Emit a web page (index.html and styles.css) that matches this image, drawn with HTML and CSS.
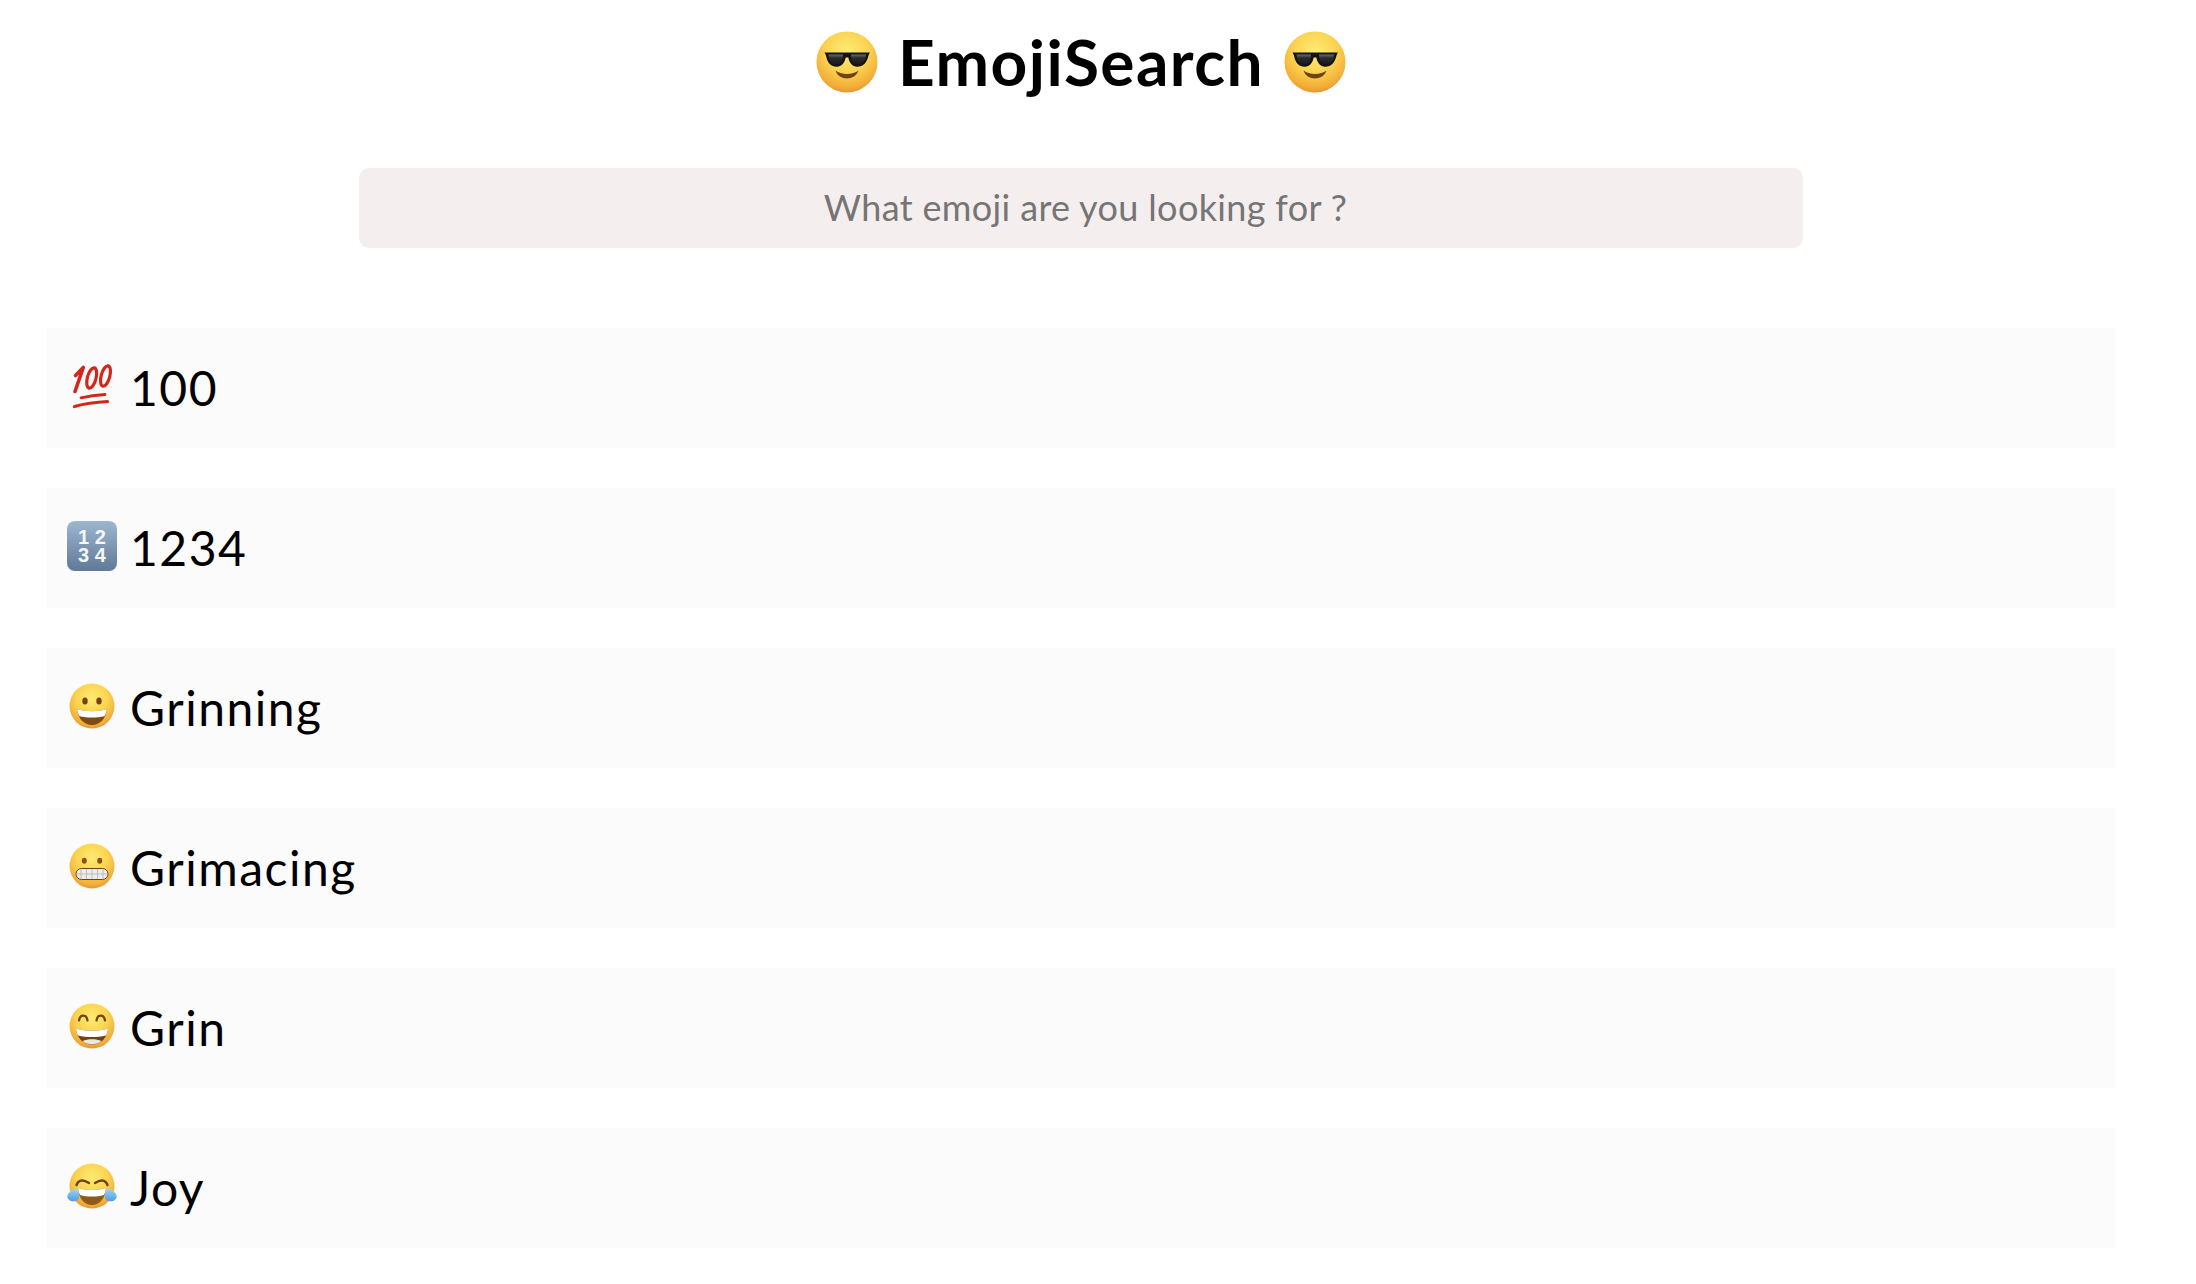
FILE: index.html
```html
<!DOCTYPE html>
<html lang="en">
<head>
<meta charset="utf-8">
<title>EmojiSearch</title>
<link rel="stylesheet" href="styles.css">
</head>
<body>
<svg class="defs" width="0" height="0" aria-hidden="true">
  <defs>
    <radialGradient id="face" cx="50%" cy="32%" r="70%">
      <stop offset="0" stop-color="#fdeb72"/>
      <stop offset="0.5" stop-color="#fbd351"/>
      <stop offset="0.85" stop-color="#f3ad38"/>
      <stop offset="1" stop-color="#e8922a"/>
    </radialGradient>
    <linearGradient id="tile" x1="0" y1="0" x2="0" y2="1">
      <stop offset="0" stop-color="#9db6d0"/>
      <stop offset="1" stop-color="#5f7a97"/>
    </linearGradient>
    <linearGradient id="lens" x1="0" y1="0" x2="0" y2="1">
      <stop offset="0" stop-color="#6c6c70"/>
      <stop offset="0.35" stop-color="#2a2a2d"/>
      <stop offset="1" stop-color="#18181a"/>
    </linearGradient>
    <linearGradient id="drop" x1="0" y1="0" x2="0" y2="1">
      <stop offset="0" stop-color="#a5d6f7"/>
      <stop offset="1" stop-color="#4a9fe6"/>
    </linearGradient>
    <symbol id="e-cool" viewBox="0 0 62 62">
      <circle cx="31" cy="31" r="30.500" fill="url(#face)"/>
      <path d="M8.500 21.500H53.800L52.500 24.500C50.500 33.500 45.500 36.500 39.500 35.500 35 34.800 33 30 32.300 26.500H29.700C29 30 27 34.800 22.500 35.500 16.500 36.500 11.500 33.500 10 24.500Z" fill="#141416"/>
      <path d="M12.500 23.500H27C27 30 24.500 33.500 20.500 33.500 15.500 33.500 13 30 12.500 23.500ZM35 23.500H50C49.500 30 47 33.500 42 33.500 38 33.500 35 30 35 23.500Z" fill="url(#lens)"/>
      <path d="M19.500 39.500C25 44 37 44 42.500 39.500 39.500 50 22.500 50 19.500 39.500Z" fill="#6f4313"/>
    </symbol>
    <symbol id="e-100" viewBox="0 0 50 50">
      <g fill="none" stroke="#d3271c" stroke-linecap="round">
        <path d="M8.500 14.500L16.300 6.500 8 30.500" stroke-width="3.600" stroke-linejoin="round"/>
        <ellipse cx="24.700" cy="17" rx="4.300" ry="10.500" transform="rotate(15 24.700 17)" stroke-width="3.200"/>
        <ellipse cx="38.500" cy="15" rx="4.300" ry="10.500" transform="rotate(15 38.500 15)" stroke-width="3.200"/>
        <path d="M14 36.800C22 35 30 34 38 33.500" stroke-width="2.800"/>
        <path d="M7.500 45.500C18 42.500 30 41 40.500 40.500" stroke-width="3.200"/>
      </g>
    </symbol>
    <symbol id="e-1234" viewBox="0 0 50 50">
      <rect width="50" height="50" rx="8" fill="url(#tile)"/>
      <text class="tile-text" x="25" y="22.500" text-anchor="middle">1 2</text>
      <text class="tile-text" x="25" y="41" text-anchor="middle">3 4</text>
    </symbol>
    <symbol id="e-grinning" viewBox="0 0 50 50">
      <circle cx="25" cy="25" r="22.500" fill="url(#face)"/>
      <ellipse cx="18" cy="20" rx="2.700" ry="3.500" fill="#6f4313"/>
      <ellipse cx="32" cy="20" rx="2.700" ry="3.500" fill="#6f4313"/>
      <path d="M10.300 28C18 31 32 31 39.700 28 39.700 37 33 44 25 44S10.300 37 10.300 28Z" fill="#7d4c14"/>
      <path d="M10.300 28C18 31 32 31 39.700 28 39.700 31 38.700 33 37.500 35.300 30 37 20 37 12.500 35.300 11.300 33 10.300 31 10.300 28Z" fill="#fff"/>
    </symbol>
    <symbol id="e-grimacing" viewBox="0 0 50 50">
      <circle cx="25" cy="25" r="22.500" fill="url(#face)"/>
      <ellipse cx="17.300" cy="19.700" rx="2.500" ry="3" fill="#8b5314"/>
      <ellipse cx="32.700" cy="19.700" rx="2.500" ry="3" fill="#8b5314"/>
      <rect x="9" y="27.500" width="32" height="11" rx="5.500" fill="#ececec" stroke="#6f4313" stroke-width="1"/>
      <path d="M9 33H41M14 28V38M19.500 28V38M25 28V38M30.500 28V38M36 28V38" stroke="#b5b5b5" stroke-width="0.800"/>
    </symbol>
    <symbol id="e-grin" viewBox="0 0 50 50">
      <circle cx="25" cy="25" r="22.500" fill="url(#face)"/>
      <path d="M12 19.500C13 13 19.500 13 20.500 19.500M29.500 19.500C30.500 13 37 13 38 19.500" fill="none" stroke="#6f4313" stroke-width="2.200" stroke-linecap="round"/>
      <path d="M9 27.500C18 30.500 32 30.500 41 27.500 40.500 36.500 34 43.500 25 43.500 16 43.500 9.500 36.500 9 27.500Z" fill="#6f4313"/>
      <path d="M9 27.500C18 30.500 32 30.500 41 27.500 40.800 30 40 32.500 39 34.500 30 36.500 20 36.500 11 34.500 10 32.500 9.200 30 9 27.500Z" fill="#fff"/>
      <path d="M15.500 40C20.500 37.800 29.500 37.800 34.500 40 29.500 44.300 20.500 44.300 15.500 40Z" fill="#e8e8e8"/>
    </symbol>
    <symbol id="e-joy" viewBox="0 0 50 50">
      <circle cx="25" cy="25" r="22.500" fill="url(#face)"/>
      <path d="M9.500 24C11 19.500 15 17.500 22 22M28 22C35 17.500 39 19.500 40.500 24" fill="none" stroke="#6f4313" stroke-width="2.400" stroke-linecap="round"/>
      <path d="M11.300 27C18 29.500 32 29.500 38.700 27 38.700 37 33 44 25 44S11.300 37 11.300 27Z" fill="#8b5a1d"/>
      <path d="M11.300 27C18 29.500 32 29.500 38.700 27 38.700 30 38 32 37 34 30 36 20 36 13 34 12 32 11.300 30 11.300 27Z" fill="#fff"/>
      <path d="M9.500 27C9.500 29 12.300 32 12.300 35.500 12.300 38.500 9.500 40.300 6.300 40.300 2.800 40.300 0.300 38 0.300 35.500 0.300 32 5 29 9.500 27Z" fill="url(#drop)"/>
      <path d="M40.500 27C40.500 29 37.700 32 37.700 35.500 37.700 38.500 40.500 40.300 43.700 40.300 47.200 40.300 49.700 38 49.700 35.500 49.700 32 45 29 40.500 27Z" fill="url(#drop)"/>
    </symbol>
  </defs>
</svg>
<main class="page">
  <header class="title">
    <svg class="title-emoji"><use href="#e-cool"/></svg>
    <h1 class="title-text">EmojiSearch</h1>
    <svg class="title-emoji"><use href="#e-cool"/></svg>
  </header>
  <div class="search">
    <input class="search-input" type="text" placeholder="What emoji are you looking for ?">
  </div>
  <ul class="results">
    <li class="result"><svg class="result-emoji"><use href="#e-100"/></svg><span class="result-name">100</span></li>
    <li class="result"><svg class="result-emoji"><use href="#e-1234"/></svg><span class="result-name">1234</span></li>
    <li class="result"><svg class="result-emoji"><use href="#e-grinning"/></svg><span class="result-name">Grinning</span></li>
    <li class="result"><svg class="result-emoji"><use href="#e-grimacing"/></svg><span class="result-name">Grimacing</span></li>
    <li class="result"><svg class="result-emoji"><use href="#e-grin"/></svg><span class="result-name">Grin</span></li>
    <li class="result"><svg class="result-emoji"><use href="#e-joy"/></svg><span class="result-name">Joy</span></li>
  </ul>
</main>
</body>
</html>
```
FILE: styles.css
```css
* { box-sizing: border-box; }
html, body { margin: 0; height: 100%; overflow: hidden; background: #fff; }
body { font-family: Lato, "Open Sans", sans-serif; color: #000; }
.defs { position: absolute; }
.page { width: 2162px; padding: 0 47px; }
.title { display: flex; justify-content: center; align-items: center; gap: 20px; height: 128px; padding-bottom: 4px; }
.title-emoji { width: 62px; height: 62px; flex: none; }
.title-text { margin: 0; font-size: 64px; font-weight: 700; line-height: 1; letter-spacing: 1.4px; }
.search { display: flex; justify-content: center; padding-top: 40px; }
.search-input { width: 1444px; height: 80px; padding: 0 0 2px 9px; border: 0; border-radius: 10px; background: #f5eeef; font: 36px Lato, sans-serif; letter-spacing: 0.35px; text-align: center; outline: 0; }
.search-input::placeholder { color: #757575; opacity: 1; }
.results { list-style: none; margin: 80px 0 0; padding: 0; display: flex; flex-direction: column; gap: 40px; }
.result { display: flex; align-items: center; gap: 13px; height: 120px; padding-left: 20px; background: #fbfbfb; }
.result-emoji { width: 50px; height: 50px; flex: none; margin-top: -4px; }
.result-name { font-size: 48px; line-height: 1; letter-spacing: 1.5px; }
.tile-text { font: 700 20px "Liberation Sans", sans-serif; fill: #f4f6f9; }
```
